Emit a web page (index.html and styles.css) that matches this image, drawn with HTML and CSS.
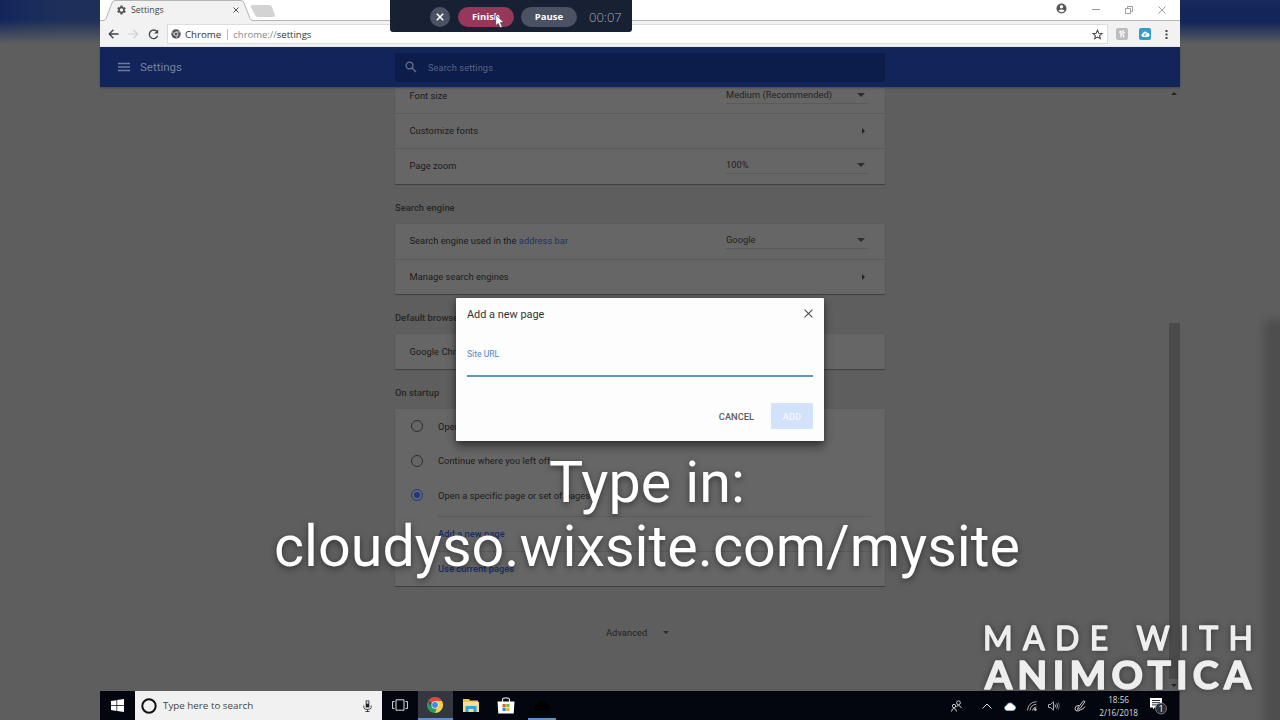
FILE: index.html
```html
<!DOCTYPE html>
<html lang="en">
<head>
    <meta charset="utf-8">
    <title>Settings</title>
    <link rel="stylesheet" href="styles.css">
</head>
<body>
    <div class="stage">
        <div class="side side-left"></div>

        <div class="screen">
            <div class="tabstrip">
                <svg class="tab-shapes" width="180" height="21" viewBox="0 0 180 21">
                    <path d="M0 20.5H3Q5 20.5 6 18.5L12 3Q13 .5 15 .5H141Q143 .5 144 3L150 18.5Q151 20.5 153 20.5H180V21H0Z" fill="#f2f2f2"/>
                    <path d="M0 20.5H3Q5 20.5 6 18.5L12 3Q13 .5 15 .5H141Q143 .5 144 3L150 18.5Q151 20.5 153 20.5H180" fill="none" stroke="#b5b5b5"/>
                    <path d="M152 5H169Q171 5 172 7L175 15Q175 17 173 17H158Q156 17 155 15L151 7Q150.500 5 152 5Z" fill="#d3d3d3"/>
                </svg>
                <div class="tab">
                    <svg width="12" height="12" viewBox="0 0 24 24"><path fill="#505050" d="M19.400 13a7.500 7.500 0 0 0 0-2l2.100-1.600-2-3.500-2.500 1a7.300 7.300 0 0 0-1.700-1L15 3.200h-4l-.4 2.700a7.300 7.300 0 0 0-1.700 1l-2.500-1-2 3.500L6.500 11a7.500 7.500 0 0 0 0 2l-2.100 1.600 2 3.500 2.500-1a7.300 7.300 0 0 0 1.700 1l.4 2.700h4l.4-2.700a7.300 7.300 0 0 0 1.700-1l2.500 1 2-3.500zM13 15.500a3.500 3.500 0 1 1 0-7 3.500 3.500 0 0 1 0 7z"/></svg>
                    <span class="tab-name">Settings</span>
                    <svg width="6" height="6" viewBox="0 0 6 6" stroke="#555" stroke-width="1"><path d="M.5 .5l5 5M5.500 .5l-5 5"/></svg>
                </div>
                <div class="window-buttons">
                    <svg width="11" height="11" viewBox="0 0 11 11"><circle cx="5.500" cy="5.500" r="5" fill="#555"/><circle cx="5.500" cy="3.800" r="1.700" fill="#fff"/><path d="M2.300 7.300Q5.500 5.500 8.700 7.300Q7.500 9.300 5.500 9.300T2.300 7.300Z" fill="#fff"/></svg>
                    <svg width="8" height="8" viewBox="0 0 8 8"><path d="M0 3.500h8" stroke="#999"/></svg>
                    <svg width="8" height="8" viewBox="0 0 8 8" fill="none" stroke="#888" stroke-width=".8"><path d="M.5 2.500h5v5h-5zM2.500 2V.5h5v5H6"/></svg>
                    <svg width="8" height="8" viewBox="0 0 8 8" stroke="#888" stroke-width=".8"><path d="M.5 .5l7 7M7.500 .5l-7 7"/></svg>
                </div>
            </div>

            <div class="toolbar">
                <svg width="11" height="10" viewBox="0 0 11 10" fill="none" stroke="#444" stroke-width="1.300"><path d="M10.500 5H1.200M5.400 .8L1.200 5l4.200 4.200"/></svg>
                <svg width="11" height="10" viewBox="0 0 11 10" fill="none" stroke="#ccc" stroke-width="1.100"><path d="M.5 5h9M5.400 .8L9.600 5 5.400 9.200"/></svg>
                <svg width="11" height="11" viewBox="0 0 11 11"><path d="M9 2.600A4.300 4.300 0 1 0 9.700 6.800" fill="none" stroke="#444" stroke-width="1.300"/><path d="M10.200 .6V4.600H6.200Z" fill="#444"/></svg>
                <div class="address">
                    <svg width="10" height="10" viewBox="0 0 10 10"><circle cx="5" cy="5" r="4.700" fill="#555"/><circle cx="5" cy="5" r="1.900" fill="#555" stroke="#eee" stroke-width=".8"/><path d="M5 2.900H9M3.200 6L1.200 2.600M6.800 6L4.900 9.500" stroke="#eee" stroke-width=".6"/></svg>
                    <span class="origin">Chrome</span>
                    <span class="url"><span>chrome://</span>settings</span>
                    <svg class="star" width="11" height="11" viewBox="0 0 24 24"><path d="M12 2.500l2.900 6.600 7.100.6-5.400 4.700 1.700 7L12 17.700l-6.300 3.700 1.700-7L2 9.700l7.100-.6z" fill="none" stroke="#444" stroke-width="2.200"/></svg>
                </div>
                <svg width="12" height="12" viewBox="0 0 12 12"><rect width="12" height="12" rx="2" fill="#bdbdbd"/><path d="M5 3v6.500M3 4.500L5 3M5 6Q7.700 4.500 7.700 9.500M6.500 3.800L8.800 4.600M7 2.300v2" fill="none" stroke="#fff" stroke-width="1.300"/></svg>
                <svg width="12" height="12" viewBox="0 0 12 12"><rect width="12" height="12" rx="2" fill="#329dc8"/><path d="M3.800 9a2 2 0 0 1 0-3.800 2.600 2.600 0 0 1 4.800-.2A2 2 0 0 1 8.500 9Z" fill="#fff"/><path d="M5 7.500Q5 5.500 7.500 5.200M5.200 7.700Q7 8 7.300 6" fill="none" stroke="#329dc8" stroke-width=".7"/></svg>
                <svg width="3" height="11" viewBox="0 0 3 11" fill="#444"><path d="M.5 1h2v2h-2zM.5 4.500h2v2h-2zM.5 8h2v2h-2z"/></svg>
            </div>

            <div class="header">
                <svg width="12" height="10" viewBox="0 0 12 10" stroke="#71799a" stroke-width="1.300"><path d="M0 1.500h12M0 5h12M0 8.500h12"/></svg>
                <span class="header-title">Settings</span>
                <div class="search">
                    <svg width="12" height="12" viewBox="0 0 12 12" fill="none" stroke="#69718e" stroke-width="1.300"><circle cx="4.500" cy="4.500" r="3.400"/><path d="M7 7l4 4"/></svg>
                    <span>Search settings</span>
                </div>
            </div>

            <div class="content">
                <div class="page">
                    <div class="card">
                        <div class="row row-cut"><span class="label">Font size</span><div class="select"><span>Medium (Recommended)</span><i class="down"></i></div></div>
                        <div class="row"><span class="label">Customize fonts</span><i class="next"></i></div>
                        <div class="row"><span class="label">Page zoom</span><div class="select"><span>100%</span><i class="down"></i></div></div>
                    </div>

                    <h2>Search engine</h2>
                    <div class="card">
                        <div class="row"><span class="label">Search engine used in the <a>address bar</a></span><div class="select"><span>Google</span><i class="down"></i></div></div>
                        <div class="row"><span class="label">Manage search engines</span><i class="next"></i></div>
                    </div>

                    <h2>Default browser</h2>
                    <div class="card">
                        <div class="row"><span class="label">Google Chrome</span></div>
                    </div>

                    <h2>On startup</h2>
                    <div class="card startup">
                        <div class="option"><i class="radio"></i><span>Open the New Tab page</span></div>
                        <div class="option"><i class="radio"></i><span>Continue where you left off</span></div>
                        <div class="option"><i class="radio checked"></i><span>Open a specific page or set of pages</span></div>
                        <div class="page-link">Add a new page</div>
                        <div class="page-link">Use current pages</div>
                    </div>

                    <div class="advanced"><span>Advanced</span><i class="down small"></i></div>
                </div>
                <div class="scrollbar">
                    <i class="scroll-up"></i>
                    <div class="thumb"></div>
                    <i class="scroll-down"></i>
                </div>
            </div>

            <div class="taskbar">
                <div class="start"><svg width="13" height="13" viewBox="0 0 13 13" fill="#fff"><path d="M0 2l5.500-.8v5H0zM6.200 1.100L13 0v6.200H6.200zM0 6.900h5.500v5L0 11.100zM6.200 6.900H13V13l-6.800-1z"/></svg></div>
                <div class="task-search">
                    <svg width="16" height="16" viewBox="0 0 16 16"><circle cx="8" cy="8" r="6.700" fill="none" stroke="#111" stroke-width="2"/></svg>
                    <span>Type here to search</span>
                    <svg width="9" height="12" viewBox="0 0 9 12"><rect x="2.700" y=".5" width="3.600" height="7" fill="#222"/><rect x="3.500" y="1.200" width="2" height="2.500" fill="#ddd"/><path d="M.8 5.500V7.500Q1 9.500 4.500 9.500T8.200 7.500V5.500M4.500 9.500V11.500M2.500 11.500h4" fill="none" stroke="#333" stroke-width=".9"/></svg>
                </div>
                <div class="task"><svg width="16" height="12" viewBox="0 0 16 12" fill="none" stroke="#ddd"><path d="M4 .8h8v10.400H4zM2.500 2.500H.6v7h1.900M13.500 2.500h1.900v7h-1.900"/></svg></div>
                <div class="task active running">
                    <svg width="16" height="16" viewBox="0 0 16 16"><path d="M8 8L1.070 4A8 8 0 0 1 14.930 4Z" fill="#dd4b3e"/><path d="M8 8V4H14.930A8 8 0 0 1 8 16Z" fill="#f9cf45"/><path d="M8 16A8 8 0 0 1 1.070 4L4.500 10 8 11.500 10 10.500Z" fill="#259c58"/><path d="M8 4.200h6.900L15.400 5 8 8z" fill="#f9cf45"/><circle cx="8" cy="8" r="3.700" fill="#eee"/><circle cx="8" cy="8" r="2.900" fill="#4286e8"/></svg>
                </div>
                <div class="task"><svg width="16" height="13" viewBox="0 0 16 13"><path d="M0 0h6l1 1.500h8V12H0z" fill="#e9c266"/><path d="M0 3h16v10H0z" fill="#fbdc8c"/><path d="M2.500 7h11v6h-3V10h-5v3h-3z" fill="#35a1d4"/></svg></div>
                <div class="task"><svg width="18" height="17" viewBox="0 0 18 17"><path d="M5.500 5V2.500Q5.500 .8 9 .8T12.500 2.500V5" fill="none" stroke="#ddd" stroke-width="1.200"/><path d="M.5 4.500h17l-.8 12H1.300z" fill="#fff"/><path d="M5.500 7H8.700v3.200H5.500z" fill="#e05c2c"/><path d="M9.300 7h3.200v3.200H9.300z" fill="#80b63c"/><path d="M5.500 10.800h3.200V14H5.500z" fill="#2c93d2"/><path d="M9.300 10.800h3.200V14H9.300z" fill="#eab62e"/></svg></div>
                <div class="task running narrow"><svg width="16" height="12" viewBox="0 0 16 12"><path d="M4 11.500a3 3 0 0 1-1-6A5 4.500 0 0 1 12.500 5 3.200 3.200 0 0 1 12 11.500Z" fill="#000"/></svg></div>

                <div class="tray">
                    <svg width="11" height="12" viewBox="0 0 11 12" fill="none" stroke="#ccc"><circle cx="7.500" cy="2.800" r="1.900"/><circle cx="3" cy="6" r="1.700"/><path d="M.5 11.500Q.8 8.500 3 8.500T5.500 11.500M5.500 7Q6 5.500 7.500 5.500T10.500 8"/></svg>
                    <svg width="10" height="6" viewBox="0 0 10 6" fill="none" stroke="#ddd"><path d="M.5 5.500L5 1l4.500 4.500"/></svg>
                    <svg width="12" height="10" viewBox="0 0 12 10"><path d="M3 9.500a2.600 2.600 0 0 1-.4-5.100A3.600 3.600 0 0 1 9.300 4 2.800 2.800 0 0 1 9.200 9.500Z" fill="#fff" stroke="#8ec5e8" stroke-width=".7"/></svg>
                    <svg width="10" height="10" viewBox="0 0 10 10" fill="none" stroke="#bbb" stroke-width=".9"><path d="M.5 9.500Q1 1.500 9.500 .6M3 9.500Q3.200 4 9.500 3.200M5.500 9.500Q5.700 6.500 9.500 5.800"/><circle cx="8.300" cy="8.500" r="1" fill="#ddd"/></svg>
                    <svg width="12" height="10" viewBox="0 0 12 10" fill="none" stroke="#bbb" stroke-width=".9"><path d="M.5 3.500h2L5.500 .8v8.400L2.500 6.500h-2zM7 3.500Q8 5 7 6.500M8.700 2.300Q10.300 5 8.700 7.700"/><path d="M10.300 1.200Q12.500 5 10.300 8.800" stroke="#666"/></svg>
                    <svg class="pen" width="12" height="12" viewBox="0 0 12 12" fill="none" stroke="#ccc"><path d="M4 8L9 1.200Q10.500 .3 11 1.800L6 8.500 3.500 9.500ZM5 5.500Q1 5.500 1 8.500T4.500 11Q6.500 9.500 8 9.200T11 6.500"/></svg>
                    <div class="clock"><span>18:56</span><span>2/16/2018</span></div>
                    <svg class="notes" width="17" height="17" viewBox="0 0 17 17"><path d="M0 0h12v9.500H4.500L3 11.500V9.500H0z" fill="#fff"/><path d="M2 2.500h8M2 4.700h8M2 6.900h6" stroke="#111" stroke-width=".9"/><circle cx="11" cy="10.500" r="5.500" fill="#2a2c30" stroke="#8b8c90" stroke-width=".8"/><text x="11" y="13.800" text-anchor="middle" class="badge">1</text></svg>
                </div>
            </div>
        </div>

        <div class="side side-right"></div>

        <div class="recorder">
            <div class="rec-close"><svg width="8" height="8" viewBox="0 0 8 8" stroke="#fff" stroke-width="1.600"><path d="M.8 .8l6.400 6.400M7.200 .8L.8 7.200"/></svg></div>
            <div class="rec-button finish">Finish</div>
            <div class="rec-button">Pause</div>
            <div class="rec-time">00:07</div>
        </div>
        <svg class="cursor" width="10" height="15" viewBox="0 0 10 15"><path d="M.7 .7v11l2.600-2.300 1.800 4.300 2.200-1-1.800-4.100h3.600z" fill="#fff" stroke="#3b2030" stroke-width=".6"/></svg>

        <div class="dialog">
            <div class="dialog-head">
                <span>Add a new page</span>
                <svg width="9" height="9" viewBox="0 0 9 9" stroke="#555" stroke-width="1.200"><path d="M.6 .6l7.800 7.800M8.400 .6L.6 8.400"/></svg>
            </div>
            <div class="field">Site URL</div>
            <div class="dialog-buttons">
                <span class="cancel">CANCEL</span>
                <span class="add">ADD</span>
            </div>
        </div>

        <div class="caption">Type in:<br>cloudyso.wixsite.com/mysite</div>

        <svg class="watermark" width="280" height="80" viewBox="0 0 280 80">
            <text class="made" x="5" y="33.500" textLength="270" lengthAdjust="spacing">MADE WITH</text>
            <text class="brand" x="7" y="73" textLength="266" lengthAdjust="spacing">ANIMOTICA</text>
        </svg>
    </div>
</body>
</html>
```
FILE: styles.css
```css
* {
    box-sizing: border-box;
}
body {
    margin: 0;
    background: #5e5e5e;
    font-family: Roboto, sans-serif;
}
svg {
    display: block;
    flex: none;
}
.stage {
    position: relative;
    display: grid;
    grid-template-columns: 100px 1080px 100px;
    width: 1280px;
    height: 720px;
    overflow: hidden;
}
.side-left {
    background: linear-gradient(to bottom, transparent 20px, #5e5e5e 44px), linear-gradient(to right, #12265c, #1e3059 60px, #1e3059);
}
.side-right {
    position: relative;
    background: linear-gradient(to bottom, #172b5e 0, #12265a 10px, #12265a 22px, #5e5e5e 44px);
}
.side-right::after {
    content: "";
    position: absolute;
    right: -10px;
    top: 320px;
    width: 26px;
    height: 420px;
    background: #4e4e4e;
    filter: blur(4px);
}
.screen {
    display: flex;
    flex-direction: column;
    height: 720px;
}

/* browser frame */
.tabstrip {
    position: relative;
    display: flex;
    justify-content: space-between;
    height: 21px;
    background: #fff;
    border-bottom: 1px solid #b5b5b5;
}
.tab-shapes {
    position: absolute;
    left: 0;
    top: 0;
}
.tab {
    position: relative;
    display: flex;
    align-items: center;
    width: 139px;
    height: 20px;
    padding-left: 15px;
    font: 8.800px "Open Sans", sans-serif;
    color: #444;
}
.tab-name {
    flex: 1;
    margin-left: 4px;
}
.window-buttons {
    display: flex;
    align-items: center;
    gap: 25px;
    height: 19px;
    padding-right: 14px;
}
.window-buttons svg:first-child {
    margin-top: -3px;
}
.toolbar {
    display: flex;
    align-items: center;
    height: 26px;
    padding: 0 12px 0 8px;
    background: #f2f2f2;
}
.toolbar > svg {
    margin-right: 9px;
}
.toolbar > svg:last-child {
    margin: 0 0 0 5px;
}
.toolbar > .address + svg {
    margin-right: 11px;
}
.address {
    display: flex;
    flex: 1;
    align-items: center;
    height: 20px;
    margin: 0 8px 0 -1px;
    padding: 0 4px 0 3px;
    background: #fff;
    border: 1px solid #ddd;
    font: 9.700px "Open Sans", sans-serif;
    color: #333;
}
.origin {
    margin-left: 4px;
    padding-right: 6px;
    border-right: 1px solid #bbb;
    line-height: 11px;
}
.url {
    margin-left: 5px;
    font-size: 9.500px;
}
.url span {
    color: #888;
}
.star {
    margin-left: auto;
}

/* settings page */
.header {
    position: relative;
    display: flex;
    align-items: center;
    height: 40px;
    padding-left: 18px;
    background: #12255a;
    box-shadow: 0 1px 2px #444;
    z-index: 1;
}
.header-title {
    width: 265px;
    padding-left: 10px;
    font-size: 11.500px;
    color: #777f9b;
}
.search {
    display: flex;
    align-items: center;
    gap: 11px;
    width: 490px;
    height: 29px;
    padding-left: 10px;
    border-radius: 2px;
    background: #0c1d4b;
    font-size: 9.3px;
    letter-spacing: .06px;
    color: #59627f;
}
.content {
    display: flex;
    height: 604px;
    background: #5e5e5e;
}
.page {
    width: 1068px;
    padding: 0 283px 0 295px;
    font-size: 9.3px;
    letter-spacing: .04px;
    color: #1b1b1b;
}
.card {
    background: #666;
    border-radius: 1px;
    box-shadow: 0 1px 1px #3f3f3f, 0 0 1px #4c4c4c;
}
.row {
    display: flex;
    align-items: center;
    justify-content: space-between;
    height: 35.3px;
    padding: 0 16px 1px 14.500px;
}
.row + .row {
    border-top: 1px solid #5a5a5a;
}
.row-cut {
    height: 26px;
    padding-bottom: 9px;
}
.row a {
    color: #1d3266;
}
.select {
    display: flex;
    align-items: center;
    justify-content: space-between;
    width: 143px;
    height: 18px;
    margin-top: -1px;
    padding-right: 4px;
    border-bottom: 1px solid #5a5a5a;
    color: #222;
}
.down {
    border: 4.500px solid transparent;
    border-top-color: #2d2d2d;
    border-bottom: 0;
}
.down.small {
    border-width: 3px;
    border-bottom: 0;
}
.next {
    margin-right: 4px;
    border: 3px solid transparent;
    border-left-color: #222;
    border-right: 0;
}
h2 {
    height: 40px;
    margin: 0;
    padding-top: 8px;
    font-size: 9.3px;
    font-weight: 500;
    line-height: 32px;
    color: #272727;
}
.startup {
    height: 177px;
}
.option {
    display: flex;
    align-items: center;
    gap: 15px;
    height: 34.600px;
    padding: 0 0 1px 16px;
}
.radio {
    width: 12px;
    height: 12px;
    border: 1.500px solid #2e2e2e;
    border-radius: 50%;
}
.radio.checked {
    border-color: #183a82;
    background: radial-gradient(circle, #183a82 2.700px, transparent 3.300px);
}
.page-link {
    height: 35px;
    margin: 0 14px 0 43px;
    border-top: 1px solid #5a5a5a;
    font-weight: 500;
    line-height: 34px;
    color: #172d69;
}
.option + .page-link {
    margin-top: 3px;
}
.advanced {
    display: flex;
    align-items: center;
    gap: 16px;
    margin: 41px 0 0 211px;
    color: #222;
}
.scrollbar {
    display: flex;
    flex-direction: column;
    align-items: center;
    width: 12px;
}
.scroll-up,
.scroll-down {
    border: 3px solid transparent;
    border-bottom-color: #222;
    border-top: 0;
}
.scroll-up {
    margin-top: 5px;
}
.scroll-down {
    margin-top: 5px;
    border-top: 3px solid #222;
    border-bottom: 0;
}
.thumb {
    width: 11px;
    height: 356px;
    margin-top: 228px;
    background: #4b4b4b;
}

/* taskbar */
.taskbar {
    display: flex;
    height: 29px;
    background: #03060e;
    font-family: "Open Sans", sans-serif;
}
.start {
    display: flex;
    align-items: center;
    justify-content: center;
    width: 35px;
}
.task-search {
    display: flex;
    align-items: center;
    width: 247px;
    padding: 0 10px 0 6px;
    background: #f1f1f1;
    font-size: 9.800px;
    color: #444;
}
.task-search span {
    flex: 1;
    margin-left: 6px;
}
.task {
    display: flex;
    align-items: center;
    justify-content: center;
    width: 35.500px;
    padding-top: 1px;
    border-bottom: 2px solid transparent;
}
.task.active {
    background: #353740;
}
.task.running {
    border-bottom-color: #5893ce;
}
.task.narrow {
    width: 28px;
    margin-left: 4px;
}
.tray {
    display: flex;
    align-items: center;
    margin-left: auto;
    padding-right: 12px;
    gap: 12px;
    border-right: 1px solid #333;
}
.tray > svg:first-child {
    margin-right: 8px;
}
.tray > svg:nth-child(4),
.tray > svg:nth-child(5) {
    margin-left: -1px;
}
.tray > .pen {
    margin-left: 2px;
}
.tray > .notes {
    margin-top: 2px;
}
.clock {
    display: flex;
    flex-direction: column;
    align-items: center;
    margin-left: 1px;
    font-size: 8.200px;
    line-height: 13px;
    color: #ddd;
}
.badge {
    font: 9px "Open Sans", sans-serif;
    fill: #fff;
}

/* screen recorder bar */
.recorder {
    position: absolute;
    left: 390px;
    top: 0;
    display: flex;
    align-items: center;
    width: 242px;
    height: 32px;
    padding: 1px 0 0 40px;
    border-radius: 0 0 3px 3px;
    background: #182034;
    font: bold 9.500px "Open Sans", sans-serif;
    color: #fff;
    z-index: 2;
}
.rec-close {
    display: flex;
    align-items: center;
    justify-content: center;
    width: 20px;
    height: 20px;
    border-radius: 50%;
    background: #4a5263;
}
.rec-button {
    width: 56px;
    height: 20px;
    margin-left: 7px;
    border-radius: 10px;
    background: #4a5263;
    line-height: 20px;
    text-align: center;
}
.rec-button.finish {
    margin-left: 8px;
    background: #97375a;
}
.rec-time {
    margin-left: 12px;
    font-size: 13px;
    font-weight: 300;
    color: #a5a9b2;
}
.cursor {
    position: absolute;
    left: 495px;
    top: 14px;
    z-index: 3;
}

/* add page dialog */
.dialog {
    position: absolute;
    left: 456px;
    top: 298px;
    width: 368px;
    height: 143px;
    padding: 11px 11px 0;
    background: #fdfdfd;
    border-radius: 1px;
    box-shadow: 0 6px 10px rgba(0, 0, 0, .4), 0 1px 4px rgba(0, 0, 0, .3);
    z-index: 2;
}
.dialog-head {
    display: flex;
    justify-content: space-between;
    font-size: 10.900px;
    line-height: 12px;
    color: #333;
}
.field {
    height: 32px;
    margin-top: 24px;
    border-bottom: 2px solid #5d96bf;
    font-size: 8.600px;
    line-height: 18px;
    color: #4c86bd;
}
.dialog-buttons {
    display: flex;
    align-items: center;
    justify-content: flex-end;
    gap: 17px;
    margin-top: 26px;
    font-size: 9.3px;
    font-weight: 500;
    color: #5c5c5c;
}
.add {
    width: 42px;
    height: 26px;
    border-radius: 1px;
    background: #d3e2fb;
    line-height: 27px;
    text-align: center;
    color: #f5f9ff;
}

.caption {
    position: absolute;
    left: 0;
    top: 451px;
    width: 1294px;
    font-size: 57.400px;
    line-height: 64px;
    text-align: center;
    color: #fff;
    text-shadow: 0 2px 6px rgba(0, 0, 0, .5);
    z-index: 4;
}
.watermark {
    position: absolute;
    left: 978px;
    top: 616px;
    filter: drop-shadow(0 0 3px rgba(0, 0, 0, .4));
    z-index: 4;
}
.made,
.brand {
    font-family: Lato, sans-serif;
    fill: #eee;
    stroke: #eee;
    stroke-linejoin: round;
}
.made {
    font-size: 32px;
    stroke-width: 1.400px;
}
.brand {
    font-size: 39px;
    font-weight: 700;
    stroke-width: 1.600px;
}
```
